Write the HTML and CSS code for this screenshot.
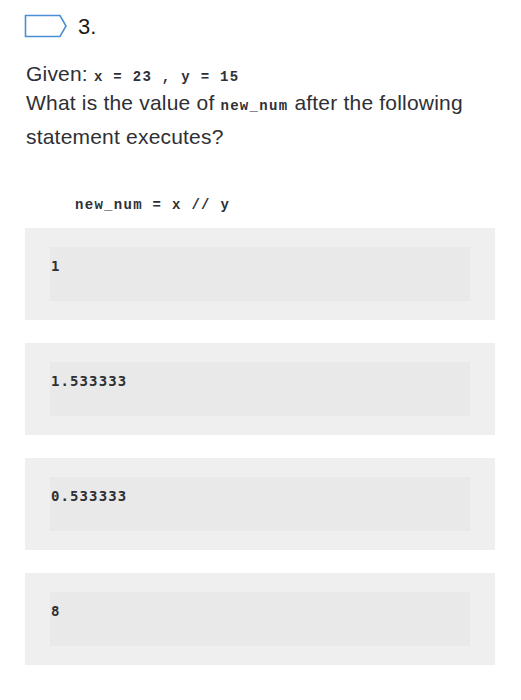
FILE: index.html
```html
<!DOCTYPE html>
<html>
<head>
<meta charset="utf-8">
<link rel="stylesheet" href="styles.css">
</head>
<body>
<div class="page">
  <div class="qhead">
    <svg class="flag" width="44" height="26" viewBox="0 0 44 26">
      <path d="M1.5 2.5 H36 L42 13 L36 23.5 H1.5 Z" fill="none" stroke="#4a8fd6" stroke-width="1.6" stroke-linejoin="miter"/>
    </svg>
    <span class="qnum">3.</span>
  </div>
  <p class="given">Given: <code class="inl">x = 23 , y = 15</code></p>
  <p class="prompt">What is the value of <code class="inl">new_num</code> after the following statement executes?</p>
  <pre class="stmt">new_num = x // y</pre>
  <div class="options">
    <div class="opt"><div class="inner"><span class="val">1</span></div></div>
    <div class="opt"><div class="inner"><span class="val">1.533333</span></div></div>
    <div class="opt"><div class="inner"><span class="val">0.533333</span></div></div>
    <div class="opt"><div class="inner"><span class="val">8</span></div></div>
  </div>
</div>
</body>
</html>
```
FILE: styles.css
```css
html, body {
  margin: 0;
  padding: 0;
  background: #ffffff;
}
body {
  font-family: "Liberation Sans", Arial, sans-serif;
  color: #2e3035;
}
.page {
  padding: 13px 26px 0 25px;
}
.qhead {
  display: flex;
  align-items: center;
  gap: 10px;
  height: 26px;
}
.flag {
  display: block;
  margin-left: -1px;
}
.qnum {
  font-size: 22px;
  color: #1a1a1a;
  margin-top: 2px;
}
.given {
  margin: 25px 0 0 1px;
  font-size: 21px;
  line-height: 20px;
  letter-spacing: 0.2px;
}
.inl {
  font-family: "Liberation Mono", "Courier New", monospace;
  font-weight: bold;
  font-size: 14px;
  letter-spacing: 1.3px;
  line-height: 1;
}
.prompt {
  margin: 2px 0 0 1px;
  font-size: 21px;
  line-height: 34px;
  letter-spacing: 0.2px;
}
.stmt {
  margin: 41px 0 0 50px;
  font-family: "Liberation Mono", "Courier New", monospace;
  font-weight: bold;
  font-size: 14px;
  letter-spacing: 1.3px;
  color: #2e3035;
  line-height: 20px;
}
.options {
  margin-top: 13px;
  display: flex;
  flex-direction: column;
  gap: 23px;
}
.opt {
  width: 470px;
  height: 92px;
  box-sizing: border-box;
  background: #efefef;
  padding: 19px 25px;
}
.inner {
  height: 54px;
  background: #e9e9e9;
  padding: 10px 0 0 1px;
  box-sizing: border-box;
}
.val {
  font-family: "DejaVu Sans Mono", monospace;
  font-size: 14px;
  font-weight: bold;
  letter-spacing: 1.1px;
  color: #2e3035;
}
```
